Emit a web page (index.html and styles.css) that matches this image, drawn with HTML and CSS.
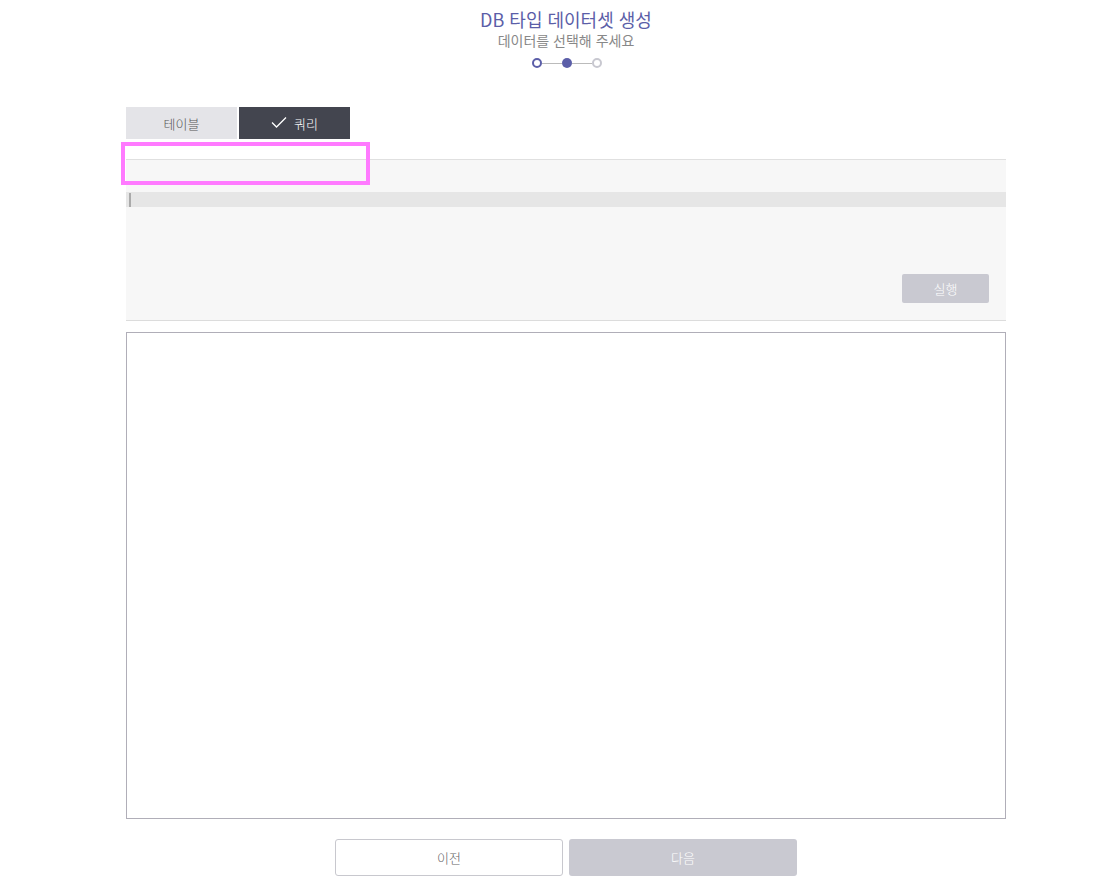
FILE: index.html
```html
<!DOCTYPE html>
<html lang="ko">
<head>
<meta charset="utf-8">
<link rel="stylesheet" href="styles.css">
</head>
<body>
<div class="page">
  <header class="head">
    <h1 class="title">DB 타입 데이터셋 생성</h1>
    <p class="subtitle">데이터를 선택해 주세요</p>
    <div class="steps">
      <span class="dot done"></span><span class="line"></span><span class="dot active"></span><span class="line"></span><span class="dot todo"></span>
    </div>
  </header>
  <main class="content">
    <div class="tabs">
      <button class="tab">테이블</button>
      <button class="tab on"><svg class="check" width="16" height="12" viewBox="0 0 16 12"><path d="M1 6.5 L5.5 11 L15 1.5" fill="none" stroke="#fff" stroke-width="1.3"/></svg>쿼리</button>
    </div>
    <div class="editor-wrap">
      <div class="highlight"></div>
      <div class="editor">
        <div class="code-line"><span class="cursor"></span></div>
        <div class="run-row"><button class="run">실행</button></div>
      </div>
    </div>
    <div class="result"></div>
    <div class="nav">
      <button class="btn prev">이전</button>
      <button class="btn next">다음</button>
    </div>
  </main>
</div>
</body>
</html>
```

FILE: styles.css
```css
* { box-sizing: border-box; }
html, body { margin: 0; padding: 0; background: #fff; }
body { font-family: "Noto Sans CJK KR", "Noto Sans", sans-serif; color: #333; }
.page { width: 1105px; height: 890px; }
.head { width: 880px; margin-left: 126px; display: flex; flex-direction: column; align-items: center; padding-top: 7px; }
.title { margin: 0; font-size: 18px; font-weight: 400; color: #5b5ea8; line-height: 24px; }
.subtitle { margin: 0; font-size: 14px; color: #888; line-height: 18px; }
.steps { display: flex; align-items: center; margin-top: 9px; margin-left: 1px; }
.dot { width: 10px; height: 10px; border-radius: 50%; display: block; }
.dot.done { border: 2px solid #5b5ea8; background: #fff; }
.dot.active { background: #5b5ea8; }
.dot.todo { border: 2px solid #c8c8d0; background: #fff; }
.line { width: 20px; height: 1px; background: #bbb; display: block; }
.content { width: 880px; margin-left: 126px; padding-top: 39px; }
.tabs { display: flex; gap: 2px; height: 32px; }
.tab { width: 111px; height: 32px; border: 0; font-family: inherit; font-size: 13px; font-weight: 300; color: #555; background: #e4e4e8; display: flex; align-items: center; justify-content: center; padding: 0; }
.tab.on { background: #43454f; color: #fff; }
.check { margin-right: 7px; margin-top: -2px; }
.editor-wrap { position: relative; padding-top: 20px; }
.highlight { position: absolute; left: -5px; top: 3px; width: 249px; height: 43px; border: 4px solid #ff7aff; pointer-events: none; }
.editor { background: #f7f7f7; border-top: 1px solid #e0e0e0; border-bottom: 1px solid #dcdcdc; height: 162px; padding-top: 32px; }
.code-line { height: 15px; background: #e6e6e6; position: relative; }
.cursor { position: absolute; left: 3px; top: 1px; width: 2px; height: 14px; background: #aaa; }
.run-row { display: flex; justify-content: flex-end; padding-right: 17px; margin-top: 67px; }
.run { width: 87px; height: 29px; border: 0; border-radius: 2px; background: #c9c9d1; color: #fff; font-family: inherit; font-size: 13px; font-weight: 300; }
.result { margin-top: 11px; height: 487px; border: 1px solid #b0aeb8; }
.nav { display: flex; justify-content: center; gap: 6px; margin-top: 20px; }
.btn { width: 228px; height: 37px; border-radius: 3px; font-family: inherit; font-size: 13px; font-weight: 300; }
.btn.prev { background: #fff; border: 1px solid #c8c8ce; color: #666; }
.btn.next { background: #c9c9d1; border: 0; color: #fff; }
```
